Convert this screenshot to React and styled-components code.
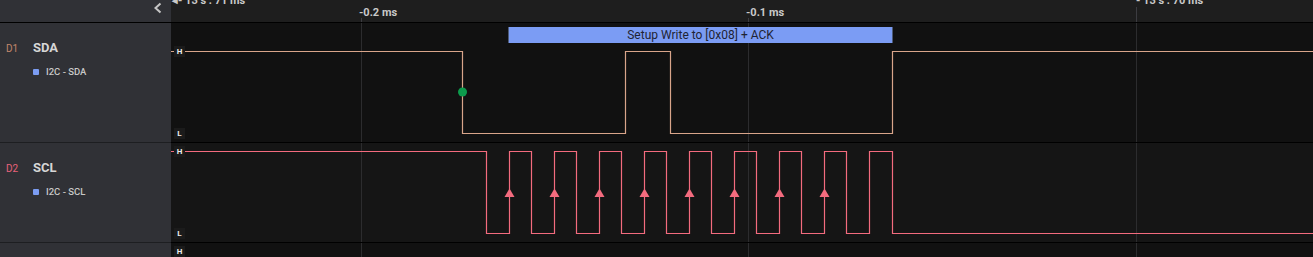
import React from 'react';
import styled, { createGlobalStyle } from 'styled-components';

const SIDEBAR_W = 171;
const TRACK_W = 1313 - SIDEBAR_W;
// global x of the time grid lines
const GRID = [361.5, 748.5, 1136.5];
const local = x => x - SIDEBAR_W;

const GlobalStyle = createGlobalStyle`
  *, *::before, *::after { box-sizing: border-box; }
  html, body {
    margin: 0;
    padding: 0;
    background: #111111;
    overflow: hidden;
  }
  body {
    font-family: Roboto, "Liberation Sans", sans-serif;
    -webkit-font-smoothing: antialiased;
  }
`;

const Viewer = styled.div`
  display: grid;
  grid-template-columns: ${SIDEBAR_W}px 1fr;
  grid-template-rows: 23px 120px 100px 1fr;
  width: 1313px;
  height: 257px;
  overflow: hidden;
`;

const HeaderSide = styled.div`
  display: flex;
  justify-content: flex-end;
  align-items: flex-start;
  padding: 2px 9px 0 0;
  background: #303136;
  border-bottom: 1px solid #000;
`;

const Ruler = styled.div`
  position: relative;
  background: #1e1e1e;
  border-bottom: 1px solid #000;
  overflow: hidden;
`;

const Tick = styled.div`
  position: absolute;
  top: ${p => (p.$major ? 7 : 18)}px;
  bottom: 0;
  width: 1px;
  background: #3c3c41;
`;

const TimeLabel = styled.span`
  position: absolute;
  top: ${p => (p.$clipped ? -5 : 7)}px;
  font-size: 11px;
  line-height: 11px;
  font-weight: 700;
  color: #c9c9c9;
  white-space: nowrap;
`;

const ChannelSide = styled.div`
  display: flex;
  align-items: baseline;
  padding: 17px 0 0 6px;
  background: #303136;
  border-bottom: 1px solid #1d1e21;
`;

const ChannelId = styled.span`
  width: 27px;
  font-size: 10px;
  color: ${p => p.$color};
`;

const NameBlock = styled.div`
  display: flex;
  flex-direction: column;
`;

const ChannelName = styled.span`
  font-size: 13px;
  line-height: 16px;
  font-weight: 700;
  color: #d6d6d6;
`;

const AnalyzerChip = styled.div`
  display: flex;
  align-items: center;
  gap: 7px;
  margin-top: 10px;
  font-size: 9.5px;
  line-height: 12px;
  font-weight: 500;
  color: #c8c8c8;
`;

const ChipSwatch = styled.span`
  width: 6px;
  height: 6px;
  border-radius: 1px;
  background: #7b9cf2;
`;

const Track = styled.div`
  position: relative;
  background: ${p => p.$bg};
  border-bottom: ${p => (p.$last ? 'none' : '1px solid #000')};
  overflow: hidden;

  svg { display: block; }
`;

const LevelBadge = styled.span`
  position: absolute;
  left: 3px;
  top: ${p => p.$y - 5.5}px;
  width: 11px;
  height: 11px;
  background: #1b1b1b;
  color: #ececec;
  font-size: 8px;
  line-height: 11px;
  font-weight: 700;
  text-align: center;
`;

const Annotation = styled.div`
  position: absolute;
  top: 4px;
  height: 16px;
  display: flex;
  align-items: center;
  justify-content: center;
  background: #7b9cf4;
  border-left: 1px solid #4c5a78;
  border-right: 1px solid #4c5a78;
  color: #1f2433;
  font-size: 12px;
  white-space: nowrap;
`;

function wavePath(edges, startHigh, yH, yL) {
  let high = startHigh;
  let d = `M0 ${high ? yH : yL}`;
  edges.forEach(x => {
    d += ` H${local(x)} V${high ? yL : yH}`;
    high = !high;
  });
  return d + ` H${TRACK_W}`;
}

const GridLines = ({ height }) =>
  GRID.map(x => (
    <line key={x} x1={local(x)} x2={local(x)} y1={0} y2={height} stroke="#2c2c2e" strokeWidth="1" />
  ));

const sdaEdges = [462.5, 625.5, 670.5, 892.5];
const sclFalls = [486.5, 531.5, 576.5, 621.5, 666.5, 711.5, 756.5, 801.5, 846.5, 892.5];
const sclRises = [509.5, 554.5, 599.5, 644.5, 689.5, 734.5, 779.5, 824.5, 869.5];
const sclEdges = sclFalls.flatMap((f, i) => (sclRises[i] ? [f, sclRises[i]] : [f]));

const SDA = '#d9a58a';
const SCL = '#f36b7e';

const Chevron = () => (
  <svg width="8" height="12" viewBox="0 0 8 12">
    <polyline points="6.5,1.5 1.5,6 6.5,10.5" fill="none" stroke="#c5c5c5" strokeWidth="2" />
  </svg>
);

const Channel = ({ id, idColor, name, analyzer }) => (
  <ChannelSide>
    <ChannelId $color={idColor}>{id}</ChannelId>
    <NameBlock>
      <ChannelName>{name}</ChannelName>
      <AnalyzerChip>
        <ChipSwatch />
        {analyzer}
      </AnalyzerChip>
    </NameBlock>
  </ChannelSide>
);

export default function App() {
  return (
    <>
      <GlobalStyle />
      <Viewer>
        <HeaderSide>
          <Chevron />
        </HeaderSide>
        <Ruler>
          <TimeLabel $clipped style={{ left: 1 }}>◂- 13 s : 71 ms</TimeLabel>
          <Tick style={{ left: local(361) }} />
          <TimeLabel style={{ left: local(359) }}>-0.2 ms</TimeLabel>
          <Tick style={{ left: local(748) }} />
          <TimeLabel style={{ left: local(746) }}>-0.1 ms</TimeLabel>
          <Tick $major style={{ left: local(1136) }} />
          <TimeLabel $clipped style={{ left: local(1136) }}>- 13 s : 70 ms</TimeLabel>
        </Ruler>

        <Channel id="D1" idColor="#c4876b" name="SDA" analyzer="I2C - SDA" />
        <Track $bg="#111111">
          <svg width={TRACK_W} height={119}>
            <GridLines height={119} />
            <path d={wavePath(sdaEdges, true, 28.5, 110.5)} fill="none" stroke={SDA} strokeWidth="1.2" />
            <circle cx={local(462.5)} cy={69} r={4.5} fill="#0c9b4c" />
          </svg>
          <Annotation style={{ left: local(508), width: 385 }}>Setup Write to [0x08] + ACK</Annotation>
          <LevelBadge $y={28.5}>H</LevelBadge>
          <LevelBadge $y={110.5}>L</LevelBadge>
        </Track>

        <Channel id="D2" idColor="#e8627a" name="SCL" analyzer="I2C - SCL" />
        <Track $bg="#151515">
          <svg width={TRACK_W} height={99}>
            <GridLines height={99} />
            <path d={wavePath(sclEdges, true, 8.5, 90.5)} fill="none" stroke={SCL} strokeWidth="1.2" />
            {sclRises.slice(0, 8).map(x => (
              <polygon
                key={x}
                points={`${local(x) - 5},54 ${local(x)},45.5 ${local(x) + 5},54`}
                fill={SCL}
              />
            ))}
          </svg>
          <LevelBadge $y={8.5}>H</LevelBadge>
          <LevelBadge $y={90.5}>L</LevelBadge>
        </Track>

        <ChannelSide />
        <Track $bg="#111111" $last>
          <svg width={TRACK_W} height={14}>
            <GridLines height={14} />
          </svg>
          <LevelBadge $y={8.5}>H</LevelBadge>
        </Track>
      </Viewer>
    </>
  );
}
